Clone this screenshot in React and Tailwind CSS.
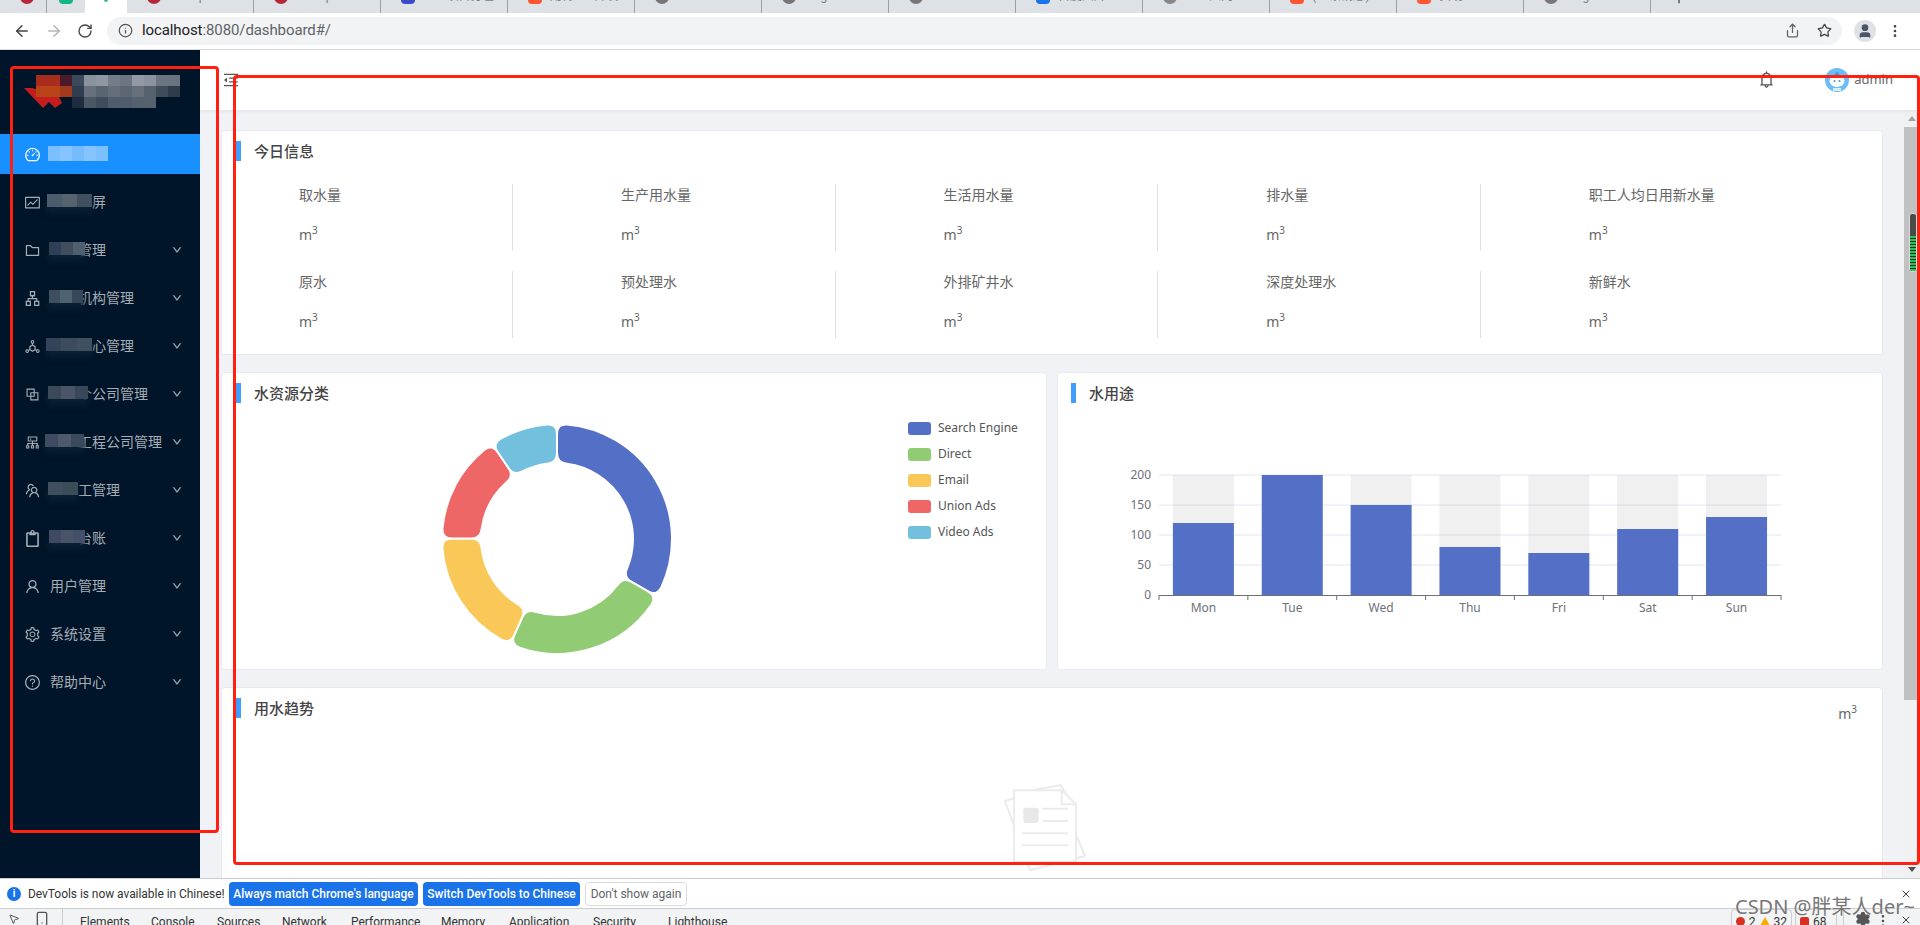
import {
  ArrowLeft, ArrowRight, RotateCw, Info, Share, Star, User, EllipsisVertical, Plus, X, MousePointer2, Smartphone, Settings,
} from "lucide-react";
import {
  AiOutlineDashboard, AiOutlineFund, AiOutlineFolder, AiOutlineApartment, AiOutlineDeploymentUnit, AiOutlineBlock,
  AiOutlineCluster, AiOutlineTeam, AiOutlineUser, AiOutlineSetting, AiOutlineQuestionCircle, AiOutlineBell,
  AiOutlineMenuFold, AiOutlineDown,
} from "react-icons/ai";
import { FaRegClipboard } from "react-icons/fa";

const tabs = [
  { w: "w-[47px]", dot: "bg-[#b5283c]", text: "" },
  { w: "w-[38px]", dot: "bg-[#10b981] rounded-sm", text: "", plain: true },
  { w: "w-[42px]", dot: "bg-[#42b883]", text: "", active: true },
  { w: "w-[127px]", dot: "bg-[#b5283c]", text: "Example" },
  { w: "w-[127px]", dot: "bg-[#b5283c]", text: "Example" },
  { w: "w-[127px]", dot: "bg-[#3b4cca] rounded-sm", text: "Vue 项目打包" },
  { w: "w-[127px]", dot: "bg-[#fc5531] rounded-sm", text: "用得Vue开发" },
  { w: "w-[127px]", dot: "bg-[#777]", text: "Dashboard" },
  { w: "w-[127px]", dot: "bg-[#777]", text: "blogs.csdn" },
  { w: "w-[127px]", dot: "bg-[#777]", text: "www.baidu" },
  { w: "w-[127px]", dot: "bg-[#1a73e8] rounded-sm", text: "百度图片" },
  { w: "w-[127px]", dot: "bg-[#888]", text: "html入门" },
  { w: "w-[127px]", dot: "bg-[#fc5531] rounded-sm", text: "(64条消息)" },
  { w: "w-[127px]", dot: "bg-[#fc5531] rounded-sm", text: "实现Vue" },
  { w: "w-[127px]", dot: "bg-[#777]", text: "blog.csdn" },
];

const menu = [
  { icon: AiOutlineFund, text: "屏", blur: "w-[45px] -ml-[3px]", cells: ["#4b5c6c", "#55636f", "#414f5f"] },
  { icon: AiOutlineFolder, text: "管理", arrow: true, blur: "w-[36px] -ml-[1px] -mr-[7px]", cells: ["#2f3f55", "#3f4d5d", "#4f5f6f"] },
  { icon: AiOutlineApartment, text: "机构管理", arrow: true, blur: "w-[34px] -ml-[1px] -mr-[5px]", cells: ["#3f4f5f", "#4f6270", "#38485a"] },
  { icon: AiOutlineDeploymentUnit, text: "心管理", arrow: true, blur: "w-[46px] -ml-[4px]", cells: ["#33445a", "#3c4c5e", "#3f5060"] },
  { icon: AiOutlineBlock, text: "个公司管理", arrow: true, blur: "w-[40px] -ml-[2px] -mr-[10px]", cells: ["#3a4a5a", "#4b5568", "#38485a"] },
  { icon: AiOutlineCluster, text: "工程公司管理", arrow: true, blur: "w-[39px] -ml-[5px] -mr-[6px]", cells: ["#3d4c60", "#4c5a6c", "#3a4a5c"] },
  { icon: AiOutlineTeam, text: "工管理", arrow: true, blur: "w-[30px] -ml-[2px]", cells: ["#3f4f60", "#3a4c58"] },
  { icon: FaRegClipboard, text: "台账", arrow: true, blur: "w-[36px] -ml-[1px] -mr-[7px]", cells: ["#3f4a62", "#4a5468", "#44506a"] },
  { icon: AiOutlineUser, text: "用户管理", arrow: true },
  { icon: AiOutlineSetting, text: "系统设置", arrow: true },
  { icon: AiOutlineQuestionCircle, text: "帮助中心", arrow: true },
];

const logoRows = [
  ["#a82d1e", "#a82d1e", "#4a1a2b", "#3a4a5c", "#8a929c", "#8f97a0", "#737d89", "#6c7683", "#939aa4", "#8b93a0", "#6c7683", "#6a7480"],
  ["#bb4318", "#bb4318", "#a33a1c", "#2f3d4e", "#66717d", "#5a6572", "#646f7b", "#5b6774", "#65707c", "#56616e", "#3f4c5a", "#2f3c4a"],
  ["transparent", "transparent", "transparent", "#1d2d3f", "#4a5866", "#3f4d5b", "#4f5c6b", "#4f5c6b", "#56616e", "#56616e", "transparent", "transparent"],
];

const statsRows = [
  ["取水量", "生产用水量", "生活用水量", "排水量", "职工人均日用新水量"],
  ["原水", "预处理水", "外排矿井水", "深度处理水", "新鲜水"],
];

const pieData = [
  { name: "Search Engine", value: 1048, color: "#5470c6" },
  { name: "Direct", value: 735, color: "#91cc75" },
  { name: "Email", value: 580, color: "#fac858" },
  { name: "Union Ads", value: 484, color: "#ee6666" },
  { name: "Video Ads", value: 300, color: "#73c0de" },
];

const barData = [
  ["Mon", 120], ["Tue", 200], ["Wed", 150], ["Thu", 80], ["Fri", 70], ["Sat", 110], ["Sun", 130],
];

const devtoolsTabs = [
  ["Elements", "w-[71px]"], ["Console", "w-[66px]"], ["Sources", "w-[65px]"], ["Network", "w-[69px]"], ["Performance", "w-[90px]"],
  ["Memory", "w-[68px]"], ["Application", "w-[84px]"], ["Security", "w-[75px]"], ["Lighthouse", "w-[80px]"],
];

// annular sector with rounded corners, angles in radians clockwise from 12 o'clock
function sector(cx, cy, r0, r1, a0, a1, c) {
  const p = (r, a) => `${(cx + r * Math.sin(a)).toFixed(2)} ${(cy - r * Math.cos(a)).toFixed(2)}`;
  const d1 = c / r1;
  const d0 = c / r0;
  return [
    `M${p(r1, a0 + d1)}`,
    `A${r1} ${r1} 0 ${a1 - a0 - 2 * d1 > Math.PI ? 1 : 0} 1 ${p(r1, a1 - d1)}`,
    `Q${p(r1, a1)} ${p(r1 - c, a1)}`,
    `L${p(r0 + c, a1)}`,
    `Q${p(r0, a1)} ${p(r0, a1 - d0)}`,
    `A${r0} ${r0} 0 ${a1 - a0 - 2 * d0 > Math.PI ? 1 : 0} 0 ${p(r0, a0 + d0)}`,
    `Q${p(r0, a0)} ${p(r0 + c, a0)}`,
    `L${p(r1 - c, a0)}`,
    `Q${p(r1, a0)} ${p(r1, a0 + d1)}`,
    "Z",
  ].join(" ");
}

function Cube() {
  return <span>m<sup className="text-[10px] -top-[6px]">3</sup></span>;
}

function CardTitle({ children }) {
  return (
    <div className="flex h-5 items-center gap-[13px]">
      <span className="h-5 w-[5px] bg-[#409eff]" />
      <span className="text-[15px] font-medium text-[#444]">{children}</span>
    </div>
  );
}

function Mosaic({ className, cells }) {
  return (
    <div className={`relative z-10 flex h-[13px] shrink-0 -translate-y-[2px] shadow-[0_6px_6px_#0a2033] ${className}`}>
      {cells.map((c, i) => (
        <span key={i} className="flex-1" style={{ backgroundColor: c }} />
      ))}
    </div>
  );
}

function Sidebar() {
  return (
    <aside className="w-[200px] shrink-0 bg-[#001529]">
      <div className="relative h-[84px] pl-[36px] pt-[25px]">
        <svg className="absolute left-[22px] top-[35px]" width="42" height="26" viewBox="0 0 42 26">
          <path d="M2 3 L21 23 L27 17 L33 23 L40 18 L36 10 L10 3 Z" fill="#c41d1d" />
        </svg>
        <div className="relative flex flex-col">
          {logoRows.map((row, i) => (
            <div key={i} className="flex h-[11px]">
              {row.map((c, j) => (
                <span key={j} className="w-3" style={{ backgroundColor: c }} />
              ))}
            </div>
          ))}
        </div>
      </div>
      <nav className="flex flex-col gap-2">
        <div className="flex h-10 items-center gap-2.5 bg-[#1890ff] pl-6 text-white">
          <AiOutlineDashboard className="text-[17px]" />
          <div className="flex h-[15px] w-[60px] -ml-[3px] -translate-y-[1px]">
            <span className="flex-1 bg-[#7cbfff]" />
            <span className="flex-1 bg-[#86c4ff]" />
            <span className="flex-1 bg-[#74bbff]" />
            <span className="flex-1 bg-[#86c4ff]" />
            <span className="flex-1 bg-[#7cbfff]" />
          </div>
        </div>
        {menu.map((item) => (
          <div key={item.text} className="flex h-10 items-center gap-[9px] pl-6 pr-[18px] text-sm text-[#a6adb4]">
            <item.icon className="shrink-0 text-[17px]" />
            <div className="flex items-center">
              {item.blur && <Mosaic className={item.blur} cells={item.cells} />}
              <span>{item.text}</span>
            </div>
            {item.arrow && <AiOutlineDown className="ml-auto text-[10px] stroke-[60px]" />}
          </div>
        ))}
      </nav>
    </aside>
  );
}

function StatsCard() {
  return (
    <section className="h-[225px] shrink-0 rounded-sm border border-[#e8eaee] bg-white pl-[14px] pt-[10px]">
      <CardTitle>今日信息</CardTitle>
      <div className="mt-[23px] flex flex-col gap-5 pl-[63px] text-sm text-[#666]">
        {statsRows.map((row, i) => (
          <div key={i} className="grid h-[67px] grid-cols-[214px_repeat(4,322.6px)]">
            {row.map((label, j) => (
              <div key={label} className={`${j > 0 ? "pl-[108px]" : ""} ${j < 4 ? "border-r border-[#dcdfe6]" : ""}`}>
                <div className="leading-[22px]">{label}</div>
                <div className="mt-[17px] leading-6"><Cube /></div>
              </div>
            ))}
          </div>
        ))}
      </div>
    </section>
  );
}

function PieCard() {
  const total = pieData.reduce((s, d) => s + d.value, 0);
  let angle = 0;
  return (
    <section className="h-[298px] rounded-sm border border-[#e8eaee] bg-white pl-[14px] pt-[10px]">
      <CardTitle>水资源分类</CardTitle>
      <div className="mt-[6px] ml-[191px] flex items-start">
        <svg width="260" height="260" viewBox="0 0 260 260" className="shrink-0">
          {pieData.map((d) => {
            const a0 = angle;
            angle += (d.value / total) * Math.PI * 2;
            return <path key={d.name} d={sector(130, 130, 76, 115, a0, angle, 10)} fill={d.color} stroke="#fff" strokeWidth="2" />;
          })}
        </svg>
        <ul className="ml-[221px] mt-[6px] text-xs text-[#555]">
          {pieData.map((d) => (
            <li key={d.name} className="flex h-[26px] items-center gap-[7px]">
              <span className="h-[13px] w-[23px] rounded-[3px]" style={{ backgroundColor: d.color }} />
              {d.name}
            </li>
          ))}
        </ul>
      </div>
    </section>
  );
}

function BarCard() {
  const left = 1159;
  const band = (1781 - 1159) / 7;
  return (
    <section className="h-[298px] rounded-sm border border-[#e8eaee] bg-white pl-[13px] pt-[10px]">
      <CardTitle>水用途</CardTitle>
      <svg width="700" height="170" viewBox="1100 450 700 170" className="ml-[29px] mt-[48px] font-['Noto_Sans',sans-serif]">
        {[0, 50, 100, 150, 200].map((v) => {
          const y = 594 - v * 0.6;
          return (
            <g key={v}>
              {v > 0 && <line x1={left} x2="1781" y1={y} y2={y} stroke="#e0e6f1" />}
              <text x="1151" y={y + 4} textAnchor="end" fontSize="12" fill="#6e7079">{v}</text>
            </g>
          );
        })}
        {barData.map(([day, v], i) => {
          const x = left + band * i + 13.9;
          return (
            <g key={day}>
              <rect x={x} y="474" width="61" height="120" fill="#b4b4b4" fillOpacity="0.2" />
              <rect x={x} y={594 - v * 0.6} width="61" height={v * 0.6} fill="#5470c6" />
              <line x1={left + band * i} x2={left + band * i} y1="594" y2="599" stroke="#6e7079" />
              <text x={left + band * (i + 0.5)} y="611" textAnchor="middle" fontSize="12" fill="#6e7079">{day}</text>
            </g>
          );
        })}
        <line x1="1781" x2="1781" y1="594" y2="599" stroke="#6e7079" />
        <line x1={left} x2="1781" y1="594.5" y2="594.5" stroke="#6e7079" />
      </svg>
    </section>
  );
}

function TrendCard() {
  return (
    <section className="h-[300px] rounded-sm border border-[#e8eaee] bg-white pl-[14px] pr-[25px] pt-[10px]">
      <div className="flex items-start justify-between">
        <CardTitle>用水趋势</CardTitle>
        <div className="mt-[6px] text-sm text-[#666]"><Cube /></div>
      </div>
      <svg width="110" height="110" viewBox="0 0 330 330" className="ml-[754px] mt-[47px]" fill="none" stroke="#ebebeb" strokeLinejoin="round" strokeLinecap="round">
        <path d="M72 82 L45 90 L120 298 L285 255 L258 190" strokeWidth="6" />
        <path d="M130 58 L212 42 L232 75" strokeWidth="6" />
        <path d="M72 58 H215 L258 100 V272 H72 Z" strokeWidth="6" fill="#fff" />
        <path d="M215 58 V100 H258" strokeWidth="6" />
        <rect x="100" y="110" width="46" height="46" rx="8" fill="#e8e8e8" stroke="none" />
        <path d="M160 113 H232 M160 150 H232 M98 187 H232 M98 223 H232" strokeWidth="6" />
      </svg>
    </section>
  );
}

function Scrollbar() {
  return (
    <div className="flex w-4 shrink-0 flex-col bg-[#f1f1f1]">
      <div className="flex h-[17px] items-center justify-center">
        <span className="border-x-[4px] border-b-[5px] border-x-transparent border-b-[#a3a3a3]" />
      </div>
      <div className="relative h-[573px] bg-[#c1c1c1]">
        <div className="absolute left-[5px] top-[86px] flex h-[59px] w-[8px] flex-col overflow-hidden rounded-[3px] border border-[#ddd] bg-[#4a4a4a]">
          <div className="mt-[22px] flex-1 bg-[repeating-linear-gradient(to_bottom,#22c55e_0,#22c55e_2px,#1f2a22_2px,#1f2a22_3px)]" />
        </div>
      </div>
      <div className="flex flex-1 items-end justify-center pb-[6px]">
        <span className="border-x-[4px] border-t-[5px] border-x-transparent border-t-[#505050]" />
      </div>
    </div>
  );
}

export default function App() {
  return (
    <div className="relative flex h-[925px] w-[1920px] flex-col overflow-hidden bg-white font-['Noto_Sans','Noto_Sans_CJK_SC',sans-serif]">
      {/* browser tabs, cut off at the top */}
      <div className="flex h-[13px] shrink-0 items-start overflow-hidden bg-[#dee1e6] font-['Roboto','Noto_Sans_CJK_SC',sans-serif] text-xs text-[#555]">
        {tabs.map((t, i) => (
          <div
            key={i}
            className={`flex h-[13px] shrink-0 items-start gap-2 ${t.w} ${t.active ? "justify-center rounded-b-none bg-white" : t.plain ? "justify-center" : "border-r border-[#9aa0a6] pl-5"}`}
          >
            <span className={`-mt-[10px] shrink-0 ${t.active ? "h-3 w-[4px] rounded-full" : "h-[14px] w-[14px] rounded-full"} ${t.dot}`} />
            {t.text && <span className="-mt-[12px] truncate opacity-70">{t.text}</span>}
          </div>
        ))}
        <Plus className="ml-[20px] -mt-[10px] h-4 w-4 text-[#444]" />
      </div>

      {/* browser toolbar */}
      <div className="flex h-[37px] shrink-0 items-center border-b border-[#dadce0] bg-white pb-[1px] text-[#5f6368]">
        <ArrowLeft className="ml-[13px] h-[18px] w-[18px] text-[#444]" />
        <ArrowRight className="ml-[14px] h-[18px] w-[18px] text-[#b4b6b9]" />
        <RotateCw className="ml-[14px] h-4 w-4 text-[#444]" />
        <div className="ml-[14px] flex h-7 w-[1735px] items-center rounded-full bg-[#f1f3f4] pl-[11px] pr-[10px]">
          <Info className="h-[15px] w-[15px] text-[#555]" />
          <span className="ml-[9px] font-['Roboto',sans-serif] text-[15px] tracking-[-0.1px] text-[#5f6368]">
            <span className="text-[#202124]">localhost</span>:8080/dashboard#/
          </span>
          <Share className="ml-auto h-[15px] w-[15px]" />
          <Star className="ml-[17px] h-[15px] w-[15px] text-[#444]" />
        </div>
        <div className="ml-[12px] flex h-[22px] w-[22px] items-center justify-center rounded-full bg-[#dfe1e5]">
          <User className="h-4 w-4 fill-[#4a5568] text-[#4a5568]" />
        </div>
        <EllipsisVertical className="ml-[11px] h-4 w-4 text-[#444]" />
      </div>

      {/* page */}
      <div className="flex h-[828px] shrink-0">
        <Sidebar />
        <div className="flex min-w-0 flex-1 flex-col">
          <header className="relative z-10 flex h-[60px] shrink-0 items-center bg-white pr-[27px] shadow-[0_1px_4px_rgba(0,21,41,0.08)]">
            <AiOutlineMenuFold className="ml-[22px] text-lg text-[#555]" />
            <AiOutlineBell className="ml-auto -translate-y-[1px] text-[19px] text-[#555]" />
            <svg className="ml-[49px]" width="24" height="24" viewBox="0 0 24 24">
              <circle cx="12" cy="12" r="12" fill="#6bbcf7" />
              <ellipse cx="12" cy="13" rx="7.5" ry="6" fill="#fff" />
              <path d="M9 7 L12 3.5 L15 7 Z" fill="#3f9de8" />
              <circle cx="9.5" cy="13" r="1" fill="#4a90d9" />
              <circle cx="14.5" cy="13" r="1" fill="#4a90d9" />
              <path d="M8 20 H16 V23 H8 Z" fill="#d7eefd" />
            </svg>
            <span className="ml-[5px] text-[13px] text-[#666]">admin</span>
          </header>
          <div className="flex min-h-0 flex-1">
            <main className="flex min-w-0 flex-1 flex-col gap-[17px] overflow-hidden bg-[#f0f2f6] pl-[21px] pr-[21px] pt-5">
              <StatsCard />
              <div className="grid shrink-0 grid-cols-2 gap-[10px]">
                <PieCard />
                <BarCard />
              </div>
              <div className="shrink-0">
                <TrendCard />
              </div>
            </main>
            <Scrollbar />
          </div>
        </div>
      </div>

      {/* translate infobar */}
      <div className="flex h-[31px] shrink-0 items-center border-y border-[#cacdd1] bg-white pl-[7px] pr-[8px] font-['Roboto',sans-serif] text-xs text-[#333]">
        <span className="flex h-[14px] w-[14px] items-center justify-center rounded-full bg-[#1a73e8] text-[10px] font-bold text-white">i</span>
        <span className="ml-[7px] w-[201px] tracking-[-0.05px]">DevTools is now available in Chinese!</span>
        <button className="h-6 w-[189px] rounded-sm bg-[#1a73e8] font-medium text-white">Always match Chrome's language</button>
        <button className="ml-[5px] h-6 w-[157px] rounded-sm bg-[#1a73e8] font-medium text-white">Switch DevTools to Chinese</button>
        <button className="ml-[5px] h-6 w-[102px] rounded-sm border border-[#dadce0] text-[#5f6368]">Don't show again</button>
        <X className="ml-auto h-3 w-3 text-[#444]" />
      </div>

      {/* devtools tab bar */}
      <div className="flex h-[16px] shrink-0 items-start overflow-hidden bg-[#f1f3f4] font-['Roboto',sans-serif] text-xs text-[#333]">
        <MousePointer2 className="ml-[8px] mt-[4px] h-3 w-3 text-[#555]" />
        <Smartphone className="ml-[14px] mt-[2px] h-4 w-4 text-[#555]" />
        <span className="ml-[12px] h-4 w-px bg-[#ccc]" />
        <div className="ml-[17px] flex pt-[5px]">
          {devtoolsTabs.map(([t, w]) => (
            <span key={t} className={w}>{t}</span>
          ))}
        </div>
        <div className="ml-auto flex h-[30px] w-[61px] items-start gap-1 rounded-sm border border-[#ccc] px-1 pt-[4px]">
          <span className="mt-[3px] h-[9px] w-[9px] rounded-full bg-[#d93025]" />2
          <span className="mt-[3px] h-0 w-0 border-x-[5px] border-b-[9px] border-x-transparent border-b-[#f9ab00]" />32
        </div>
        <div className="ml-[3px] flex h-[30px] w-[42px] items-start gap-1 rounded-sm border border-[#ccc] px-1 pt-[4px]">
          <span className="mt-[3px] h-[9px] w-[9px] rounded-[2px] bg-[#d93025]" />68
        </div>
        <span className="ml-[6px] h-4 w-px bg-[#ccc]" />
        <Settings className="ml-[11px] mt-[2px] h-4 w-4 fill-[#555] text-[#555]" />
        <EllipsisVertical className="ml-[4px] mt-[4px] h-4 w-4 text-[#555]" />
        <X className="ml-[9px] mr-[8px] mt-[5px] h-3 w-3 text-[#444]" />
      </div>

      {/* red annotation frames drawn over the screenshot */}
      <div className="absolute z-30 left-[10px] top-[66px] h-[767px] w-[209px] rounded-sm border-[3px] border-[#ff2012]" />
      <div className="absolute z-30 left-[233px] top-[75px] h-[790px] w-[1687px] rounded-sm border-[3px] border-[#ff2012]" />

      {/* watermark */}
      <div className="absolute z-30 left-[1735px] top-[893px] text-[20px] leading-7 text-[#777] [text-shadow:0_0_2px_#fff]">
        CSDN @胖某人der~
      </div>
    </div>
  );
}
